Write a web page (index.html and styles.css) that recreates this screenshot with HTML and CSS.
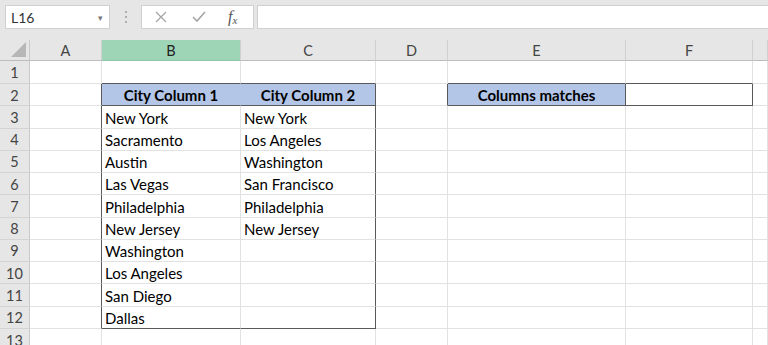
FILE: index.html
```html
<!DOCTYPE html>
<html lang="en">
<head>
    <meta charset="UTF-8">
    <meta name="viewport" content="width=device-width, initial-scale=1.0">
    <title>Columns matches</title>
    <link rel="stylesheet" href="styles.css">
</head>
<body>
    <div class="formula-bar">
        <div class="name-box">
            <span>L16</span>
            <span class="drop">&#9662;</span>
        </div>
        <div class="grip">
            <svg width="4" height="14" viewBox="0 0 4 14"><circle cx="2" cy="2" r="1" fill="#9a9a9a"/><circle cx="2" cy="7" r="1" fill="#9a9a9a"/><circle cx="2" cy="12" r="1" fill="#9a9a9a"/></svg>
        </div>
        <div class="fx-buttons">
            <svg class="btn-icon" width="14" height="14" viewBox="0 0 14 14"><path d="M2 2 L12 12 M12 2 L2 12" stroke="#a6a6a6" stroke-width="1.3" fill="none"/></svg>
            <svg class="btn-icon" width="16" height="14" viewBox="0 0 16 14"><path d="M2 7 L6 11 L14 2" stroke="#a6a6a6" stroke-width="1.6" fill="none"/></svg>
            <span class="fx">f<sub>x</sub></span>
        </div>
        <div class="formula-input"></div>
    </div>

    <table class="sheet">
        <colgroup>
            <col class="w-hdr">
            <col class="w-a">
            <col class="w-b">
            <col class="w-c">
            <col class="w-d">
            <col class="w-e">
            <col class="w-f">
            <col class="w-g">
        </colgroup>
        <tr class="col-heads">
            <th class="corner"><svg width="15" height="15" viewBox="0 0 15 15"><polygon points="15,0 15,15 0,15" fill="#b7b7b7"/></svg></th>
            <th>A</th>
            <th class="sel">B</th>
            <th>C</th>
            <th>D</th>
            <th>E</th>
            <th>F</th>
            <th></th>
        </tr>
        <tr class="r-first">
            <th>1</th><td></td><td class="bb"></td><td class="bb"></td><td></td><td class="bb"></td><td class="bb"></td><td></td>
        </tr>
        <tr>
            <th>2</th><td class="br"></td><td class="hd hd-join">City Column 1</td><td class="hd br bb">City Column 2</td><td class="br"></td><td class="hd br bb">Columns matches</td><td class="br bb"></td><td></td>
        </tr>
        <tr>
            <th>3</th><td class="br"></td><td>New York</td><td class="br">New York</td><td></td><td></td><td></td><td></td>
        </tr>
        <tr>
            <th>4</th><td class="br"></td><td>Sacramento</td><td class="br">Los Angeles</td><td></td><td></td><td></td><td></td>
        </tr>
        <tr>
            <th>5</th><td class="br"></td><td>Austin</td><td class="br">Washington</td><td></td><td></td><td></td><td></td>
        </tr>
        <tr>
            <th>6</th><td class="br"></td><td>Las Vegas</td><td class="br">San Francisco</td><td></td><td></td><td></td><td></td>
        </tr>
        <tr>
            <th>7</th><td class="br"></td><td>Philadelphia</td><td class="br">Philadelphia</td><td></td><td></td><td></td><td></td>
        </tr>
        <tr>
            <th>8</th><td class="br"></td><td>New Jersey</td><td class="br">New Jersey</td><td></td><td></td><td></td><td></td>
        </tr>
        <tr>
            <th>9</th><td class="br"></td><td>Washington</td><td class="br"></td><td></td><td></td><td></td><td></td>
        </tr>
        <tr>
            <th>10</th><td class="br"></td><td>Los Angeles</td><td class="br"></td><td></td><td></td><td></td><td></td>
        </tr>
        <tr>
            <th>11</th><td class="br"></td><td>San Diego</td><td class="br"></td><td></td><td></td><td></td><td></td>
        </tr>
        <tr>
            <th>12</th><td class="br"></td><td class="bb">Dallas</td><td class="br bb"></td><td></td><td></td><td></td><td></td>
        </tr>
        <tr class="r-last">
            <th>13</th><td></td><td></td><td></td><td></td><td></td><td></td><td></td>
        </tr>
    </table>
</body>
</html>
```

FILE: styles.css
```css
body {
    margin: 0;
    background-color: #ffffff;
    font-family: Lato, "Open Sans", sans-serif;
    color: #000;
    overflow: hidden;
}
.formula-bar {
    height: 40px;
    background-color: #e6e6e6;
    display: flex;
    align-items: flex-start;
    padding: 5px 0 0 5px;
    box-sizing: border-box;
}
.name-box {
    width: 105px;
    height: 24px;
    background-color: #fff;
    border: 1px solid #d0d0d0;
    box-sizing: border-box;
    display: flex;
    align-items: center;
    justify-content: space-between;
    padding: 0 6px 0 5px;
    font-size: 14px;
    color: #333;
}
.name-box .drop {
    font-size: 9px;
    color: #777;
}
.grip {
    width: 31px;
    height: 24px;
    display: flex;
    align-items: center;
    justify-content: center;
}
.fx-buttons {
    width: 113px;
    height: 24px;
    background-color: #fff;
    border: 1px solid #d0d0d0;
    box-sizing: border-box;
    display: flex;
    align-items: center;
    padding-left: 12px;
    gap: 23px;
}
.fx {
    font-family: "Liberation Serif", serif;
    font-style: italic;
    font-size: 16px;
    color: #555;
    margin-left: -2px;
}
.fx sub {
    font-size: 11px;
    vertical-align: -2px;
}
.formula-input {
    flex: 1;
    height: 24px;
    margin-left: 3px;
    background-color: #fff;
    border: 1px solid #d0d0d0;
    border-right: none;
    box-sizing: border-box;
}
.sheet {
    border-collapse: separate;
    border-spacing: 0;
    table-layout: fixed;
    width: 768px;
}
.w-hdr { width: 30px; }
.w-a { width: 72px; }
.w-b { width: 139px; }
.w-c { width: 135px; }
.w-d { width: 72px; }
.w-e { width: 178px; }
.w-f { width: 127px; }
.w-g { width: 15px; }
.sheet th, .sheet td {
    box-sizing: border-box;
    padding: 0;
    border-right: 1px solid #e2e2e2;
    border-bottom: 1px solid #e2e2e2;
    height: 22.27px;
    white-space: nowrap;
    overflow: hidden;
}
.sheet td {
    font-size: 15px;
    padding: 0 0 0 3px;
    vertical-align: bottom;
    line-height: 19px;
}
.sheet th {
    background-color: #e6e6e6;
    font-weight: normal;
    font-size: 14.5px;
    color: #444;
    text-align: center;
    border-right-color: #c9c9c9;
    border-bottom-color: #d4d4d4;
    padding-top: 1px;
}
.col-heads th {
    height: 21px;
    border-right-color: #d0d0d0;
    border-bottom: 1px solid #bdbdbd;
    vertical-align: middle;
    padding-top: 0;
}
.col-heads th.sel {
    background-color: #9fd5b7;
    border-bottom-color: #8cc7a6;
    color: #222;
}
.col-heads th.corner {
    position: relative;
    border-right-color: #c9c9c9;
}
.corner svg {
    position: absolute;
    right: 3px;
    bottom: 3px;
}
.r-first th, .r-first td {
    height: 23px;
}
.r-last th, .r-last td {
    height: 30px;
    vertical-align: top;
}
.r-last th {
    line-height: 22px;
}
.sheet td.hd {
    background-color: #b4c6e7;
    font-weight: bold;
    text-align: center;
    padding-left: 0;
    border-bottom: 1px solid #595959;
}
.sheet td.hd-join {
    border-right-color: #b4c6e7;
}
.sheet td.br {
    border-right: 1px solid #595959;
}
.sheet td.bb {
    border-bottom: 1px solid #595959;
}
```
